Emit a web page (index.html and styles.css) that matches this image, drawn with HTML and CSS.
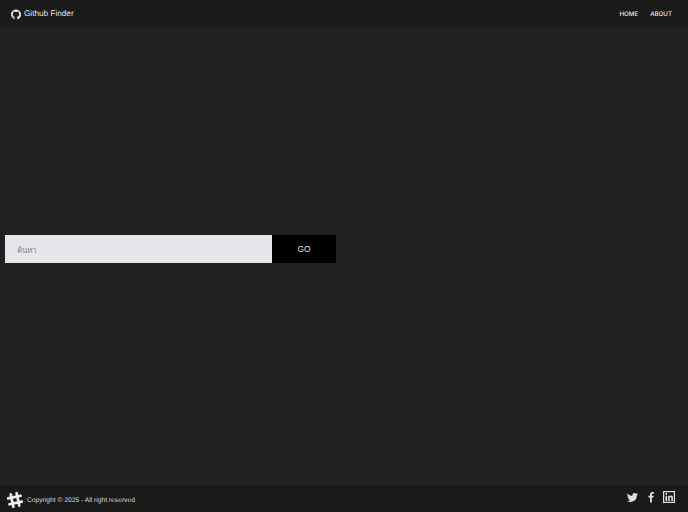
FILE: index.html
```html
<!DOCTYPE html>
<html lang="th">
<head>
<meta charset="utf-8">
<title>Github Finder</title>
<link rel="stylesheet" href="styles.css">
</head>
<body>
<header class="topbar">
  <a class="brand" href="#">
    <svg class="brand-icon" viewBox="0 0 16 16" aria-hidden="true"><path fill="currentColor" d="M8 0C3.58 0 0 3.58 0 8c0 3.54 2.29 6.53 5.47 7.59.4.07.55-.17.55-.38 0-.19-.01-.82-.01-1.49-2.01.37-2.53-.49-2.69-.94-.09-.23-.48-.94-.82-1.13-.28-.15-.68-.52-.01-.53.63-.01 1.08.58 1.23.82.72 1.21 1.87.87 2.33.66.07-.52.28-.87.51-1.07-1.78-.2-3.64-.89-3.64-3.95 0-.87.31-1.59.82-2.15-.08-.2-.36-1.02.08-2.12 0 0 .67-.21 2.2.82.64-.18 1.32-.27 2-.27s1.36.09 2 .27c1.53-1.04 2.2-.82 2.2-.82.44 1.1.16 1.92.08 2.12.51.56.82 1.27.82 2.15 0 3.07-1.87 3.75-3.65 3.95.29.25.54.73.54 1.48 0 1.07-.01 1.93-.01 2.2 0 .21.15.46.55.38A8.01 8.01 0 0 0 16 8c0-4.42-3.58-8-8-8z"/></svg>
    <span>Github Finder</span>
  </a>
  <nav class="nav">
    <a href="#">HOME</a>
    <a href="#">ABOUT</a>
  </nav>
</header>
<main class="main">
  <form class="search">
    <input class="search-input" type="text" placeholder="ค้นหา">
    <button class="search-button" type="button">GO</button>
  </form>
</main>
<footer class="footer">
  <div class="copy">
    <svg class="slack" viewBox="0 0 16 16" aria-hidden="true"><g stroke="currentColor" stroke-width="2.6" stroke-linecap="round" fill="none" transform="rotate(-12 8 8)"><path d="M5 1.600V14.400"/><path d="M11 1.600V14.400"/><path d="M1.600 5H14.400"/><path d="M1.600 11H14.400"/></g></svg>
    <span>Copyright © 2025 - All right reserved</span>
  </div>
  <div class="social">
    <svg class="tw" viewBox="0 0 24 24" aria-hidden="true"><path fill="currentColor" d="M24 4.56c-.89.39-1.83.65-2.83.77 1.02-.61 1.8-1.57 2.17-2.72-.95.56-2.01.97-3.13 1.19A4.92 4.92 0 0 0 11.8 8.3C7.72 8.1 4.1 6.13 1.67 3.15a4.93 4.93 0 0 0 1.52 6.57c-.8-.03-1.56-.25-2.23-.62v.06a4.93 4.93 0 0 0 3.95 4.83c-.72.2-1.48.22-2.22.08a4.93 4.93 0 0 0 4.6 3.42A9.9 9.9 0 0 1 0 19.54 13.94 13.94 0 0 0 7.55 21.75c9.14 0 14.3-7.72 13.99-14.64.96-.7 1.8-1.56 2.46-2.55z"/></svg>
    <svg class="fb" viewBox="0 0 10 18" aria-hidden="true"><path fill="currentColor" d="M6.500 18V10h2.700l.4-3.100H6.500V4.900c0-.9.25-1.500 1.550-1.500H9.700V.6C9.400.55 8.450.5 7.350.5 5 .5 3.400 1.900 3.400 4.550V6.900H.7V10h2.700v8z"/></svg>
    <svg class="li" viewBox="0 0 24 24" aria-hidden="true"><path fill="currentColor" fill-rule="evenodd" d="M1 0h22a1 1 0 0 1 1 1v22a1 1 0 0 1-1 1H1a1 1 0 0 1-1-1V1a1 1 0 0 1 1-1zM2.400 2.400v19.200h19.200V2.400zM5 9.500h3.200V20H5zM6.600 4.200a1.900 1.900 0 1 1 0 3.800 1.900 1.900 0 0 1 0-3.800zM10.200 9.500h3v1.400c.5-.9 1.600-1.700 3.100-1.700 3.100 0 3.500 2.100 3.500 4.800V20h-3.200v-5.100c0-1.200 0-2.800-1.500-2.800s-1.700 1.300-1.700 2.700V20h-3.200z"/></svg>
  </div>
</footer>
</body>
</html>
```
FILE: styles.css
```css
* {
  box-sizing: border-box;
}

html,
body {
  height: 100%;
}

body {
  margin: 0;
  display: flex;
  flex-direction: column;
  background: #212121;
  color: #e6e6e6;
  font-family: "Liberation Sans", Inter, "Noto Sans", sans-serif;
  text-rendering: geometricPrecision;
}

a {
  color: inherit;
  text-decoration: none;
}

.topbar {
  height: 28px;
  flex: none;
  display: flex;
  align-items: center;
  justify-content: space-between;
  padding: 0 16px 0 11px;
  background: #1b1b1b;
}

.brand {
  display: flex;
  align-items: center;
  gap: 3px;
  font-size: 8.2px;
  line-height: 12px;
}

.brand-icon {
  width: 10px;
  height: 11px;
  margin-top: 1px;
}

.nav {
  display: flex;
  gap: 12px;
  font-family: Inter, "Liberation Sans", sans-serif;
  font-size: 6.2px;
  font-weight: 500;
  color: #ececec;
}

.main {
  flex: 1;
  display: flex;
  align-items: center;
  padding: 0 5px 15px;
}

.search {
  display: flex;
  width: 331px;
  height: 28px;
}

.search-input {
  flex: 1;
  min-width: 0;
  border: 0;
  border-radius: 0;
  padding: 0 12px;
  background: #e4e6e9;
  font-size: 8px;
  font-family: "Noto Sans", Inter, sans-serif;
  outline: none;
}

.search-input::placeholder {
  color: #85888d;
}

.search-button {
  width: 64px;
  border: 0;
  border-radius: 0;
  background: #000;
  color: #e0e0e0;
  font-family: inherit;
  font-size: 8.4px;
  font-weight: 400;
}

.footer {
  height: 27px;
  flex: none;
  display: flex;
  align-items: center;
  justify-content: space-between;
  padding: 0 13px 0 7px;
  background: #1a1a1a;
}

.copy {
  display: flex;
  align-items: center;
  gap: 4px;
  margin-top: 3px;
  font-size: 6.7px;
  color: #dcdcdc;
}

.slack {
  width: 16px;
  height: 16px;
  color: #eee;
}

.social {
  display: flex;
  align-items: center;
  gap: 10px;
  margin-bottom: 3px;
  color: #dfdfdf;
}

.tw {
  width: 11px;
  height: 11px;
}

.fb {
  width: 6px;
  height: 12px;
  margin-right: -1px;
}

.li {
  width: 12px;
  height: 12px;
}
```
